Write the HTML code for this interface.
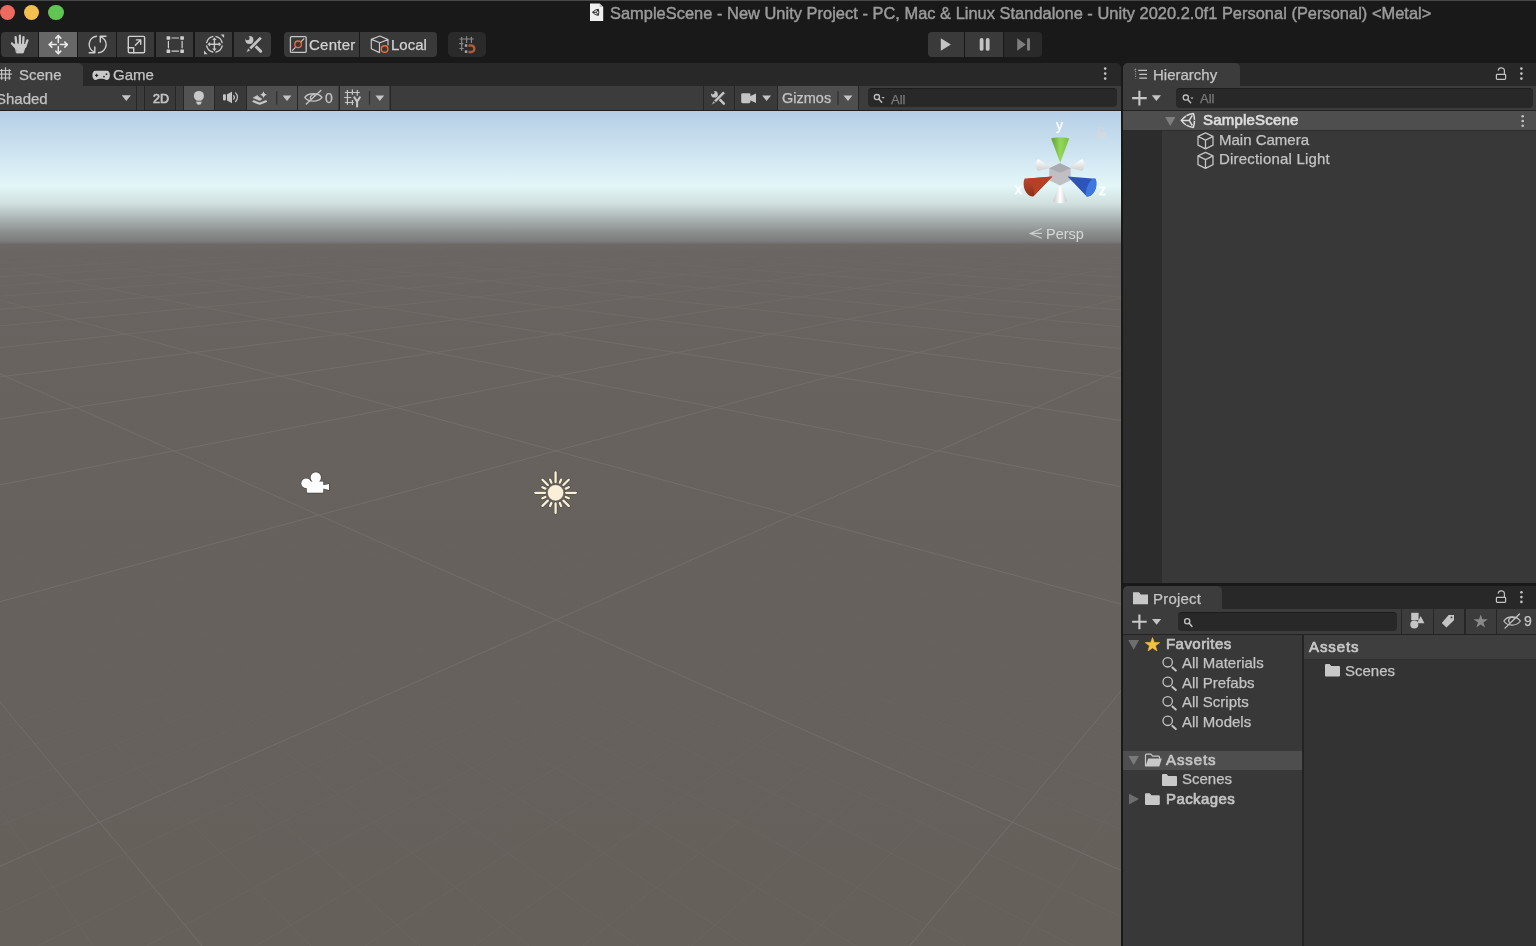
<!DOCTYPE html>
<html><head><meta charset="utf-8">
<style>
*{margin:0;padding:0;box-sizing:border-box}
html,body{width:1536px;height:946px;overflow:hidden;background:#191919}
body{position:relative;font-family:"Liberation Sans",sans-serif;color:#c4c4c4}
.a{position:absolute}
.t{position:absolute;white-space:nowrap;font-size:15px;line-height:18px;will-change:transform;-webkit-text-stroke-width:0.25px}
svg{position:absolute;overflow:visible}
</style></head><body>

<!-- title bar -->
<div class="a" style="left:0;top:0;width:1536px;height:1px;background:#474747"></div>
<div class="a" style="left:-0.3px;top:5px;width:15.4px;height:15.4px;border-radius:50%;background:#ed6a5e"></div>
<div class="a" style="left:23.9px;top:5px;width:15.4px;height:15.4px;border-radius:50%;background:#f4bf4f"></div>
<div class="a" style="left:48.2px;top:5px;width:15.4px;height:15.4px;border-radius:50%;background:#61c554"></div>
<div class="t" style="left:610.4px;top:3px;font-size:16.4px;line-height:20px;color:#9b9b9b;letter-spacing:0.03px;-webkit-text-stroke-width:0.45px">SampleScene - New Unity Project - PC, Mac &amp; Linux Standalone - Unity 2020.2.0f1 Personal (Personal) &lt;Metal&gt;</div>

<!-- main toolbar -->
<!--TOOLS--><!-- tool buttons -->
<div class="a" style="left:1px;top:32px;width:36.8px;height:24.7px;background:#393939;border-radius:4px 0 0 4px"></div>
<div class="a" style="left:39px;top:32px;width:37.9px;height:24.7px;background:#676767"></div>
<div class="a" style="left:78px;top:32px;width:37.8px;height:24.7px;background:#393939"></div>
<div class="a" style="left:117px;top:32px;width:37.3px;height:24.7px;background:#393939"></div>
<div class="a" style="left:156px;top:32px;width:37.2px;height:24.7px;background:#393939"></div>
<div class="a" style="left:195px;top:32px;width:37.1px;height:24.7px;background:#393939"></div>
<div class="a" style="left:234px;top:32px;width:37px;height:24.7px;background:#393939;border-radius:0 4px 4px 0"></div>

<div class="a" style="left:283.8px;top:32px;width:75.3px;height:24.7px;background:#393939;border-radius:4px 0 0 4px"></div>
<div class="a" style="left:360.1px;top:32px;width:76.8px;height:24.7px;background:#393939;border-radius:0 4px 4px 0"></div>
<div class="a" style="left:448.4px;top:31.8px;width:37.9px;height:25.5px;background:#2a2a2a;border-radius:5px"></div>
<div class="a" style="left:927.6px;top:32px;width:36.2px;height:24.7px;background:#3a3a3a;border-radius:4px 0 0 4px"></div>
<div class="a" style="left:965px;top:32px;width:38px;height:24.7px;background:#3a3a3a"></div>
<div class="a" style="left:1004px;top:32px;width:38.3px;height:24.7px;background:#2a2a2a;border-radius:0 4px 4px 0"></div>
<svg width="1536" height="60" style="left:0;top:0">
 <!-- hand -->
 <g fill="#c8c8c8" stroke="#c8c8c8" stroke-linecap="round" stroke-width="2.3">
  <path d="M15.6 37.2L16.4 45M19.9 35.6L19.9 44.5M23.5 37.1L23 45M27.4 40.4L25.2 47M12 43.4L15.8 47.8"/>
  <path stroke-width="1" stroke-linejoin="round" d="M15 44L25.8 44.5L23.2 52.9L16.8 52.9Z"/>
 </g>
 <!-- move -->
 <g fill="none" stroke="#ececec" stroke-width="1.5" stroke-linecap="round" stroke-linejoin="round">
  <path d="M58.3 35.6V42.6M58.3 46.6V53.6M49.3 44.6H56.3M60.3 44.6H67.3"/>
  <path d="M55.8 38.1L58.3 35.6L60.8 38.1M55.8 51.1L58.3 53.6L60.8 51.1M51.8 42.1L49.3 44.6L51.8 47.1M64.8 42.1L67.3 44.6L64.8 47.1"/>
 </g>
 <!-- rotate -->
 <g fill="none" stroke="#d0d0d0" stroke-width="1.4" stroke-linecap="round" stroke-linejoin="round">
  <path d="M96.5 36.2A8.3 8.3 0 0 0 94.5 52.2"/>
  <path d="M89.2 52.7H94.8V47"/>
  <path d="M98.5 52.8A8.3 8.3 0 0 0 100.3 36.6"/>
  <path d="M106 36.2H100.3V42"/>
 </g>
 <!-- scale -->
 <g fill="none" stroke="#d0d0d0" stroke-width="1.4" stroke-linecap="round" stroke-linejoin="round">
  <rect x="128.3" y="36.4" width="16.3" height="16.4" rx="1.2"/>
  <path d="M128.3 47.7H133.7V52.8M135.3 45.3L140.6 40M136.4 39.9H140.7V44.2"/>
 </g>
 <!-- rect -->
 <g fill="#d0d0d0">
  <rect x="166.6" y="36.2" width="3.6" height="3.6" rx="0.6"/><rect x="180.3" y="36.2" width="3.6" height="3.6" rx="0.6"/>
  <rect x="166.6" y="49.4" width="3.6" height="3.6" rx="0.6"/><rect x="180.3" y="49.4" width="3.6" height="3.6" rx="0.6"/>
 </g>
 <path d="M172 38H178.5M172 51.1H178.5M168.4 41.3V47.8M182.1 41.3V47.8" stroke="#d0d0d0" stroke-width="1.2" stroke-linecap="round"/>
 <!-- transform -->
 <g fill="none" stroke="#c8c8c8" stroke-width="1.4" stroke-linecap="round">
  <path d="M216.04 36.57A7.9 7.9 0 0 1 222.13 42.66M222.13 45.94A7.9 7.9 0 0 1 216.04 52.03M212.76 52.03A7.9 7.9 0 0 1 206.67 45.94M206.67 42.66A7.9 7.9 0 0 1 212.76 36.57"/>
  <path d="M214.4 39.2V49.4M209.3 44.3H219.5"/>
 </g>
 <g fill="#c8c8c8">
  <path d="M214.4 37.4L216.6 40H212.2Z M214.4 51.2L216.6 48.6H212.2Z M207.5 44.3L210.1 42.1V46.5Z M221.3 44.3L218.7 42.1V46.5Z"/>
  <path d="M220.6 34.5H224.1V38Z M204 50.6V54.2H207.6Z"/>
 </g>
 <!-- custom tools -->
<g transform="translate(244.8 35.4) scale(1.15)">
 <path d="M4.2 4.2L13.8 13.8" stroke="#c4c4c4" stroke-width="2.7" stroke-linecap="round"/>
 <circle cx="4" cy="4" r="3.5" fill="#c4c4c4"/>
 <circle cx="2.3" cy="2.3" r="1.9" fill="#393939"/>
 <path d="M13.1 0.6L15.4 2.9L5.6 12.7L3.3 10.4Z" fill="#c4c4c4" stroke="#393939" stroke-width="0.9"/>
 <path d="M2.9 11L5 13.1L1 15Z" fill="#c4c4c4" stroke="#393939" stroke-width="0.6"/>
</g>
 <!-- center -->
 <rect x="290.4" y="36.6" width="15.8" height="15.8" rx="1.2" fill="none" stroke="#c8c8c8" stroke-width="1.3"/>
 <path d="M292.5 50.3L295.2 47.6M301.1 41.6L303.8 38.8" stroke="#c8c8c8" stroke-width="1.2" stroke-linecap="round"/>
 <circle cx="298.1" cy="44.3" r="3.3" fill="none" stroke="#ea6f3e" stroke-width="1.3"/>
 <!-- local cube -->
 <g fill="none" stroke="#c8c8c8" stroke-width="1.2" stroke-linejoin="round">
  <path d="M371.3 39.4L379.9 36L388 39.6L379.9 42.8Z M371.3 39.4V48.8L379.5 52.6V42.8 M388 39.6V45.5"/>
 </g>
 <circle cx="384.6" cy="49" r="3.3" fill="#393939" stroke="#ea6f3e" stroke-width="1.4"/>
 <!-- snap -->
 <g stroke="#888" stroke-width="1.2">
  <path d="M461.7 37V50.8M466.6 36.3V42.9M471.4 36.8V42.9M459.4 39H473.8M459.2 43.7H463.4M459.5 48.5H463.7"/>
 </g>
 <rect x="464.8" y="44.3" width="2.5" height="2.5" fill="#a8a8a8"/><rect x="464.8" y="50.4" width="2.5" height="2.5" fill="#a8a8a8"/>
 <path d="M468.5 45.5H471.6A3.3 3.3 0 0 1 471.6 52H468.5" fill="none" stroke="#b05a3c" stroke-width="2.3"/>
 <!-- play/pause/step -->
 <path d="M940.8 38.2L950.9 44.5L940.8 50.8Z" fill="#c4c4c4"/>
 <rect x="979.7" y="38.1" width="3.8" height="12.7" rx="1.9" fill="#c4c4c4"/>
 <rect x="985.8" y="38.1" width="3.8" height="12.7" rx="1.9" fill="#c4c4c4"/>
 <path d="M1017.2 38.2L1025.8 44.5L1017.2 50.8Z" fill="#7e7e7e"/>
 <rect x="1027" y="38.1" width="3" height="12.7" rx="1.5" fill="#7e7e7e"/>
 <!-- doc icon title -->
 <path d="M590 3.5H599.6L603.2 7.1V21.1H590Z" fill="#f0f0f0"/>
 <path d="M599.6 3.5V7.1H603.2" fill="#bdbdbd"/>
 <g fill="none" stroke="#2a2a2a" stroke-width="1" stroke-linejoin="round">
  <path d="M592.6 12.3Q594.8 9.6 598.3 9.2Q599.3 12.3 598.3 15.4Q594.8 15 592.6 12.3Z"/>
  <path d="M592.6 12.3H596.4L598 9.8M596.4 12.3L598 14.8"/>
 </g>
</svg>
<div class="t" style="left:309.3px;top:36px;color:#d2d2d2;letter-spacing:0.25px">Center</div>
<div class="t" style="left:391px;top:36px;color:#d2d2d2">Local</div>
<!--/TOOLS-->

<!-- dock: tab strip -->
<div class="a" style="left:0;top:63px;width:1121px;height:23px;background:#282828;border-top-right-radius:5px"></div>
<div class="a" style="left:0;top:63px;width:83px;height:23px;background:#3c3c3c;border-top-right-radius:5px"></div>
<div class="t" style="left:19px;top:66px">Scene</div>
<div class="t" style="left:113px;top:66px">Game</div>

<!-- scene toolbar -->
<div class="a" style="left:0;top:86px;width:1121px;height:24px;background:#3c3c3c"></div>
<div class="a" style="left:0;top:110px;width:1121px;height:1px;background:#1f1f1f"></div>
<!--SCENETB--><div class="a" style="left:136px;top:86px;width:1.2px;height:24px;background:#262626;"></div>
<div class="a" style="left:144px;top:86px;width:1.2px;height:24px;background:#262626;"></div>
<div class="a" style="left:175px;top:86px;width:1.2px;height:24px;background:#262626;"></div>
<div class="a" style="left:183px;top:86px;width:1.2px;height:24px;background:#262626;"></div>
<div class="a" style="left:214px;top:86px;width:1.2px;height:24px;background:#262626;"></div>
<div class="a" style="left:246px;top:86px;width:1.2px;height:24px;background:#262626;"></div>
<div class="a" style="left:297px;top:86px;width:1.2px;height:24px;background:#262626;"></div>
<div class="a" style="left:338.5px;top:86px;width:1.2px;height:24px;background:#262626;"></div>
<div class="a" style="left:389.5px;top:86px;width:1.2px;height:24px;background:#262626;"></div>
<div class="a" style="left:702.5px;top:86px;width:1.2px;height:24px;background:#262626;"></div>
<div class="a" style="left:734.3px;top:86px;width:1.2px;height:24px;background:#262626;"></div>
<div class="a" style="left:776.8px;top:86px;width:1.2px;height:24px;background:#262626;"></div>
<div class="a" style="left:858.2px;top:86px;width:1.2px;height:24px;background:#262626;"></div>
<div class="a" style="left:145.2px;top:86px;width:29.8px;height:24px;background:#393939;"></div>
<div class="a" style="left:184.2px;top:86px;width:29.8px;height:24px;background:#525252;"></div>
<div class="a" style="left:215.2px;top:86px;width:30.8px;height:24px;background:#393939;"></div>
<div class="a" style="left:247.2px;top:86px;width:49.8px;height:24px;background:#4f4f4f;"></div>
<div class="a" style="left:298.2px;top:86px;width:40.3px;height:24px;background:#4f4f4f;"></div>
<div class="a" style="left:339.7px;top:86px;width:49.8px;height:24px;background:#4f4f4f;"></div>
<div class="a" style="left:703.7px;top:86px;width:30.6px;height:24px;background:#3a3a3a;"></div>
<div class="a" style="left:735.5px;top:86px;width:41.3px;height:24px;background:#3a3a3a;"></div>
<div class="a" style="left:778.2px;top:86px;width:80px;height:24px;background:#4e4e4e;"></div>
<div class="a" style="left:868.3px;top:88.2px;width:248.3px;height:19.2px;background:#282828;border-radius:4px;border-top:1px solid #1c1c1c"></div>
<!--/SCENETB-->

<!-- scene view -->
<div class="a" style="left:0;top:111px;width:1121px;height:835px;overflow:hidden;background:linear-gradient(#b6cfe6 0px,#cde3f1 40px,#e3f7f8 75px,#d0dfde 93px,#a8b0b0 109px,#8b8d8d 122px,#7c7d7d 130px,#6c6865 133.5px,#6a6562 141px,#67625e 300px,#66605b 835px)"><!--GRID--><svg width="1121" height="835" viewBox="0 0 1121 835" style="left:0;top:0">
<defs>
<linearGradient id="gm" x1="0" y1="0" x2="0" y2="835" gradientUnits="userSpaceOnUse">
<stop offset="0.160" stop-color="#fff" stop-opacity="0"/>
<stop offset="0.200" stop-color="#fff" stop-opacity="0.5"/>
<stop offset="0.300" stop-color="#fff" stop-opacity="1"/>
</linearGradient>
<linearGradient id="gn" x1="0" y1="0" x2="0" y2="835" gradientUnits="userSpaceOnUse">
<stop offset="0.52" stop-color="#fff" stop-opacity="0"/>
<stop offset="0.80" stop-color="#fff" stop-opacity="0.85"/>
<stop offset="1" stop-color="#fff" stop-opacity="1"/>
</linearGradient>
<mask id="mm" maskUnits="userSpaceOnUse" x="0" y="0" width="1121" height="835"><rect width="1121" height="835" fill="url(#gm)"/></mask>
<mask id="mn" maskUnits="userSpaceOnUse" x="0" y="0" width="1121" height="835"><rect width="1121" height="835" fill="url(#gn)"/></mask>
</defs>
<path mask="url(#mn)" d="M-2098.20 956.83L-792.96 265.24M3209.91 956.83L1904.68 265.24M-1971.81 956.83L-765.43 265.24M3083.53 956.83L1877.15 265.24M-1845.43 956.83L-737.91 265.24M2957.15 956.83L1849.62 265.24M-1719.04 956.83L-710.38 265.24M2830.76 956.83L1822.10 265.24M-1592.66 956.83L-682.85 265.24M2704.38 956.83L1794.57 265.24M-1466.28 956.83L-655.33 265.24M2578.00 956.83L1767.04 265.24M-1339.89 956.83L-627.80 265.24M2451.61 956.83L1739.52 265.24M-1213.51 956.83L-600.27 265.24M2325.23 956.83L1711.99 265.24M-1087.13 956.83L-572.74 265.24M2198.84 956.83L1684.46 265.24M-834.36 956.83L-517.69 265.24M1946.08 956.83L1629.41 265.24M-707.98 956.83L-490.16 265.24M1819.69 956.83L1601.88 265.24M-581.59 956.83L-462.64 265.24M1693.31 956.83L1574.35 265.24M-455.21 956.83L-435.11 265.24M1566.93 956.83L1546.83 265.24M-328.83 956.83L-407.58 265.24M1440.54 956.83L1519.30 265.24M-202.44 956.83L-380.06 265.24M1314.16 956.83L1491.77 265.24M-76.06 956.83L-352.53 265.24M1187.78 956.83L1464.25 265.24M50.32 956.83L-325.00 265.24M1061.39 956.83L1436.72 265.24M176.71 956.83L-297.48 265.24M935.01 956.83L1409.19 265.24M429.48 956.83L-242.42 265.24M682.24 956.83L1354.14 265.24M555.86 956.83L-214.89 265.24M555.86 956.83L1326.61 265.24M682.24 956.83L-187.37 265.24M429.48 956.83L1299.09 265.24M808.63 956.83L-159.84 265.24M303.09 956.83L1271.56 265.24M935.01 956.83L-132.31 265.24M176.71 956.83L1244.03 265.24M1061.39 956.83L-104.79 265.24M50.32 956.83L1216.50 265.24M1187.78 956.83L-77.26 265.24M-76.06 956.83L1188.98 265.24M1314.16 956.83L-49.73 265.24M-202.44 956.83L1161.45 265.24M1440.54 956.83L-22.21 265.24M-328.83 956.83L1133.92 265.24M1693.31 956.83L32.85 265.24M-581.59 956.83L1078.87 265.24M1819.69 956.83L60.37 265.24M-707.98 956.83L1051.34 265.24M1946.08 956.83L87.90 265.24M-834.36 956.83L1023.82 265.24M2072.46 956.83L115.43 265.24M-960.74 956.83L996.29 265.24M2198.84 956.83L142.96 265.24M-1087.13 956.83L968.76 265.24M2325.23 956.83L170.48 265.24M-1213.51 956.83L941.24 265.24M2451.61 956.83L198.01 265.24M-1339.89 956.83L913.71 265.24M2578.00 956.83L225.54 265.24M-1466.28 956.83L886.18 265.24M2704.38 956.83L253.06 265.24M-1592.66 956.83L858.65 265.24M2957.15 956.83L308.12 265.24M-1845.43 956.83L803.60 265.24M3083.53 956.83L335.64 265.24M-1971.81 956.83L776.07 265.24M3209.91 956.83L363.17 265.24M-2098.20 956.83L748.55 265.24M3336.30 956.83L390.70 265.24M-2224.58 956.83L721.02 265.24M3462.68 956.83L418.22 265.24M-2350.96 956.83L693.49 265.24M3589.06 956.83L445.75 265.24M-2477.35 956.83L665.97 265.24M3715.45 956.83L473.28 265.24M-2603.73 956.83L638.44 265.24M3841.83 956.83L500.81 265.24M-2730.11 956.83L610.91 265.24M3968.21 956.83L528.33 265.24M-2856.50 956.83L583.39 265.24M4220.98 956.83L583.39 265.24M-3109.26 956.83L528.33 265.24M4347.37 956.83L610.91 265.24M-3235.65 956.83L500.81 265.24M4473.75 956.83L638.44 265.24M-3362.03 956.83L473.28 265.24M4600.13 956.83L665.97 265.24M-3488.41 956.83L445.75 265.24M4726.52 956.83L693.49 265.24M-3614.80 956.83L418.22 265.24M4852.90 956.83L721.02 265.24M-3741.18 956.83L390.70 265.24M4979.28 956.83L748.55 265.24M-3867.56 956.83L363.17 265.24M5105.67 956.83L776.07 265.24M-3993.95 956.83L335.64 265.24M5232.05 956.83L803.60 265.24M-4120.33 956.83L308.12 265.24M5484.82 956.83L858.65 265.24M-4373.10 956.83L253.06 265.24M5611.20 956.83L886.18 265.24M-4499.48 956.83L225.54 265.24M5737.58 956.83L913.71 265.24M-4625.87 956.83L198.01 265.24M5863.97 956.83L941.24 265.24M-4752.25 956.83L170.48 265.24M5990.35 956.83L968.76 265.24M-4878.63 956.83L142.96 265.24M6116.73 956.83L996.29 265.24M-5005.02 956.83L115.43 265.24M6243.12 956.83L1023.82 265.24M-5131.40 956.83L87.90 265.24M6369.50 956.83L1051.34 265.24M-5257.78 956.83L60.37 265.24M6495.89 956.83L1078.87 265.24M-5384.17 956.83L32.85 265.24M6748.65 956.83L1133.92 265.24M-5636.93 956.83L-22.21 265.24M6875.04 956.83L1161.45 265.24M-5763.32 956.83L-49.73 265.24M7001.42 956.83L1188.98 265.24M-5889.70 956.83L-77.26 265.24M7127.80 956.83L1216.50 265.24M-6016.09 956.83L-104.79 265.24M7254.19 956.83L1244.03 265.24M-6142.47 956.83L-132.31 265.24M7380.57 956.83L1271.56 265.24M-6268.85 956.83L-159.84 265.24M7506.95 956.83L1299.09 265.24M-6395.24 956.83L-187.37 265.24M7633.34 956.83L1326.61 265.24M-6521.62 956.83L-214.89 265.24M7759.72 956.83L1354.14 265.24M-6648.00 956.83L-242.42 265.24M8012.49 956.83L1409.19 265.24M-6900.77 956.83L-297.48 265.24M8138.87 956.83L1436.72 265.24M-7027.15 956.83L-325.00 265.24M8265.25 956.83L1464.25 265.24M-7153.54 956.83L-352.53 265.24M8391.64 956.83L1491.77 265.24M-7279.92 956.83L-380.06 265.24M8518.02 956.83L1519.30 265.24M-7406.30 956.83L-407.58 265.24M8644.41 956.83L1546.83 265.24M-7532.69 956.83L-435.11 265.24M8770.79 956.83L1574.35 265.24M-7659.07 956.83L-462.64 265.24M8897.17 956.83L1601.88 265.24M-7785.45 956.83L-490.16 265.24M9023.56 956.83L1629.41 265.24M-7911.84 956.83L-517.69 265.24M9276.32 956.83L1684.46 265.24M-8164.61 956.83L-572.74 265.24M9402.71 956.83L1711.99 265.24M-8290.99 956.83L-600.27 265.24M9529.09 956.83L1739.52 265.24M-8417.37 956.83L-627.80 265.24M9655.47 956.83L1767.04 265.24M-8543.76 956.83L-655.33 265.24M9781.86 956.83L1794.57 265.24M-8670.14 956.83L-682.85 265.24M9908.24 956.83L1822.10 265.24M-8796.52 956.83L-710.38 265.24M10034.62 956.83L1849.62 265.24M-8922.91 956.83L-737.91 265.24M10161.01 956.83L1877.15 265.24M-9049.29 956.83L-765.43 265.24M10287.39 956.83L1904.68 265.24M-9175.67 956.83L-792.96 265.24M10540.16 956.83L1959.73 265.24M-9428.44 956.83L-848.01 265.24M10666.54 956.83L1987.26 265.24M-9554.82 956.83L-875.54 265.24M10792.93 956.83L2014.79 265.24M-9681.21 956.83L-903.07 265.24M10919.31 956.83L2042.31 265.24M-9807.59 956.83L-930.59 265.24M11045.69 956.83L2069.84 265.24M-9933.97 956.83L-958.12 265.24M11172.08 956.83L2097.37 265.24M-10060.36 956.83L-985.65 265.24M11298.46 956.83L2124.89 265.24M-10186.74 956.83L-1013.17 265.24M11424.84 956.83L2152.42 265.24M-10313.13 956.83L-1040.70 265.24M11551.23 956.83L2179.95 265.24M-10439.51 956.83L-1068.23 265.24" stroke="#6a6560" stroke-width="1" fill="none"/>
<path mask="url(#mm)" d="M-960.74 956.83L-466.07 133.51M303.09 956.83L-379.10 133.51M1566.93 956.83L-292.13 133.51M2830.76 956.83L-205.15 133.51M4094.60 956.83L-118.18 133.51M5358.43 956.83L-31.21 133.51M6622.27 956.83L55.77 133.51M7886.10 956.83L142.74 133.51M9149.94 956.83L229.71 133.51M10413.77 956.83L316.68 133.51M11677.61 956.83L403.66 133.51M12941.45 956.83L490.63 133.51M14205.28 956.83L577.60 133.51M15469.12 956.83L664.57 133.51M16732.95 956.83L751.55 133.51M17996.79 956.83L838.52 133.51M19260.62 956.83L925.49 133.51M20524.46 956.83L1012.47 133.51M21788.29 956.83L1099.44 133.51M23052.13 956.83L1186.41 133.51M-23204.25 956.83L-161.67 133.51M-21940.41 956.83L-74.69 133.51M-20676.58 956.83L12.28 133.51M-19412.74 956.83L99.25 133.51M-18148.90 956.83L186.22 133.51M-16885.07 956.83L273.20 133.51M-15621.23 956.83L360.17 133.51M-14357.40 956.83L447.14 133.51M-13093.56 956.83L534.12 133.51M-11829.73 956.83L621.09 133.51M-10565.89 956.83L708.06 133.51M-9302.06 956.83L795.03 133.51M-8038.22 956.83L882.01 133.51M-6774.39 956.83L968.98 133.51M-5510.55 956.83L1055.95 133.51M-4246.72 956.83L1142.92 133.51M-2982.88 956.83L1229.90 133.51M-1719.04 956.83L1316.87 133.51M-455.21 956.83L1403.84 133.51M808.63 956.83L1490.82 133.51" stroke="#726e6a" stroke-width="1" fill="none"/>
</svg><!--/GRID--></div>

<!-- hierarchy -->
<div class="a" style="left:1121px;top:63px;width:2.5px;height:883px;background:#191919"></div>
<div class="a" style="left:1123px;top:63px;width:413px;height:23px;background:#282828;border-top-left-radius:5px"></div>
<div class="a" style="left:1123px;top:63px;width:117px;height:23px;background:#3c3c3c;border-top-left-radius:5px;border-top-right-radius:5px"></div>
<div class="t" style="left:1153px;top:66px">Hierarchy</div>
<div class="a" style="left:1123px;top:86px;width:413px;height:24px;background:#3c3c3c"></div>
<div class="a" style="left:1123px;top:110px;width:413px;height:1px;background:#232323"></div>
<div class="a" style="left:1175.9px;top:88px;width:357px;height:19.8px;background:#282828;border-radius:4px;border-top:1px solid #1c1c1c"></div>

<div class="a" style="left:1123px;top:111px;width:413px;height:472px;background:#383838"></div>
<div class="a" style="left:1123px;top:111px;width:413px;height:19px;background:#4e4e4e"></div>
<div class="a" style="left:1123px;top:129.5px;width:413px;height:1px;background:#2e2e2e"></div>
<div class="a" style="left:1123px;top:130px;width:39px;height:453px;background:#2c2c2c"></div>
<div class="t" style="left:1203px;top:111px;font-weight:normal;-webkit-text-stroke-width:0.7px;color:#dcdcdc;letter-spacing:0.2px">SampleScene</div>
<div class="t" style="left:1219px;top:131px">Main Camera</div>
<div class="t" style="left:1219px;top:150px;letter-spacing:0.2px">Directional Light</div>

<!-- project -->
<div class="a" style="left:1123px;top:583px;width:413px;height:3px;background:#191919"></div>
<div class="a" style="left:1123px;top:586px;width:413px;height:23px;background:#282828;border-top-left-radius:5px"></div>
<div class="a" style="left:1123px;top:586px;width:99px;height:23px;background:#3c3c3c;border-top-left-radius:5px;border-top-right-radius:5px"></div>
<div class="t" style="left:1153px;top:590px;letter-spacing:0.2px">Project</div>
<div class="a" style="left:1123px;top:609px;width:413px;height:25px;background:#3c3c3c"></div>
<div class="a" style="left:1123px;top:634px;width:413px;height:1px;background:#232323"></div>
<div class="a" style="left:1178px;top:612px;width:219.4px;height:19px;background:#282828;border-radius:4px;border-top:1px solid #1c1c1c"></div>
<div class="a" style="left:1400.8px;top:608px;width:1.2px;height:26px;background:#262626;"></div>
<div class="a" style="left:1433.3px;top:608px;width:1.2px;height:26px;background:#262626;"></div>
<div class="a" style="left:1464.4px;top:608px;width:1.2px;height:26px;background:#262626;"></div>
<div class="a" style="left:1495.9px;top:608px;width:1.2px;height:26px;background:#262626;"></div>

<div class="a" style="left:1123px;top:635px;width:179px;height:311px;background:#383838"></div>
<div class="a" style="left:1302px;top:635px;width:1.5px;height:311px;background:#232323"></div>
<div class="a" style="left:1303.5px;top:635px;width:233px;height:311px;background:#333333"></div>
<div class="a" style="left:1303.5px;top:635px;width:233px;height:24px;background:#3e3e3e"></div>
<div class="a" style="left:1303.5px;top:659px;width:233px;height:1px;background:#2f2f2f"></div>
<div class="t" style="left:1309px;top:638px;font-weight:normal;-webkit-text-stroke-width:0.7px;color:#c8c8c8;letter-spacing:0.9px">Assets</div>
<div class="t" style="left:1345px;top:662px">Scenes</div>
<div class="t" style="left:1166px;top:635px;font-weight:normal;-webkit-text-stroke-width:0.7px;letter-spacing:0.45px">Favorites</div>
<div class="t" style="left:1182px;top:654px">All Materials</div>
<div class="t" style="left:1182px;top:674px">All Prefabs</div>
<div class="t" style="left:1182px;top:693px">All Scripts</div>
<div class="t" style="left:1182px;top:713px">All Models</div>
<div class="a" style="left:1123px;top:751px;width:179px;height:19px;background:#4e4e4e"></div>
<div class="t" style="left:1166px;top:751px;font-weight:normal;-webkit-text-stroke-width:0.7px;letter-spacing:0.9px">Assets</div>
<div class="t" style="left:1182px;top:770px">Scenes</div>
<div class="t" style="left:1166px;top:790px;font-weight:normal;-webkit-text-stroke-width:0.7px;letter-spacing:0.4px">Packages</div>

<!--ICONS2--><svg width="1536" height="946" style="left:0;top:0">
 <!-- scene tab grid icon -->
 <path d="M1.6 68.9V79.8M5.5 67.3V81M9.3 68.9V79.8M0 70.5H10.9M0 74.2H11.9M0 78H10.9" stroke="#c4c4c4" stroke-width="1.2"/>
 <!-- gamepad -->
 <path d="M95.5 70.7H106.8C108.8 70.7 109.9 72.8 109.9 75.3C109.9 78.3 108.5 80 106.7 80C105 80 104.2 78.8 102.6 78.8H99.6C98 78.8 97.2 80 95.6 80C93.8 80 92.4 78.3 92.4 75.3C92.4 72.8 93.5 70.7 95.5 70.7Z" fill="#c8c8c8"/>
 <path d="M95 75.4H98.2M96.6 73.8V77" stroke="#282828" stroke-width="1.1"/>
 <circle cx="106.5" cy="74.2" r="0.9" fill="#282828"/><circle cx="104" cy="76.6" r="0.9" fill="#282828"/>
 <!-- shaded arrow -->
 <path d="M121.7 95.2H130.9L126.3 101Z" fill="#c4c4c4"/>
 <!-- bulb -->
 <circle cx="198.9" cy="95.9" r="5" fill="#c8c8c8"/>
 <path d="M196.4 100.2H201.4V102.2A2.5 2.5 0 0 1 196.4 102.2Z" fill="#c8c8c8"/>
 <path d="M196.4 101.2H201.4" stroke="#545454" stroke-width="0.9"/>
 <!-- audio -->
 <rect x="223" y="94.2" width="2.9" height="6.2" rx="0.8" fill="#c4c4c4"/>
 <path d="M227 94.3L232 91.7V103.2L227 100.6Z" fill="#c4c4c4"/>
 <path d="M233.6 95.7A2.6 2.6 0 0 1 233.6 99.2M235.6 92.9A6 6 0 0 1 235.6 101.5" fill="none" stroke="#c4c4c4" stroke-width="1.2" stroke-linecap="round"/>
 <!-- effects -->
 <path d="M253.6 101.3L259.7 103.7L265.9 101.3" fill="none" stroke="#c8c8c8" stroke-width="2.2" stroke-linecap="round" stroke-linejoin="round"/>
 <path d="M253.2 97.8L257.4 95.4L259.2 97.4L261.6 98.6L261.2 99.8L259.6 100.6Z" fill="#c8c8c8" stroke="#c8c8c8" stroke-width="0.6" stroke-linejoin="round"/>
 <path d="M263.5 90.4Q264.1 94.2 268.1 94.8Q264.1 95.4 263.5 98.9Q262.9 95.4 258.9 94.8Q262.9 94.2 263.5 90.4Z" fill="#c8c8c8" stroke="#4a4a4a" stroke-width="0.7"/>
 <path d="M276.7 91V104.6" stroke="#2e2e2e" stroke-width="1.2"/>
 <path d="M282.6 95.4H291.4L287 101.1Z" fill="#c4c4c4"/>
 <!-- hidden eye -->
 <path d="M304.8 97.4C308 92.5 318.5 92.5 322 97.4C318.5 102.3 308 102.3 304.8 97.4Z" fill="none" stroke="#c4c4c4" stroke-width="1.3"/>
 <path d="M306.3 104L320.8 90.6" stroke="#c4c4c4" stroke-width="1.4" stroke-linecap="round"/>
 <path d="M310.8 99.2A3 3 0 0 1 315.5 95.6" fill="none" stroke="#c4c4c4" stroke-width="1.2"/>
 <!-- grid Y icon -->
 <path d="M347.4 90V104.7M352.4 89.6V94.7M352.4 100V104.9M357.3 90V95.8M344.9 92.5H359.8M344.2 97.5H351.2M344.9 102.5H353.8" stroke="#c8c8c8" stroke-width="1.2"/>
 <path d="M354.3 97.3L357.1 101.6L359.9 97.3M357.1 101.6V106.4" fill="none" stroke="#c8c8c8" stroke-width="2" stroke-linecap="round" stroke-linejoin="round"/>
 <path d="M369.5 91V104.6" stroke="#2e2e2e" stroke-width="1.2"/>
 <path d="M375.4 95.4H384.2L379.8 101.1Z" fill="#c4c4c4"/>
 <!-- scene tools icon -->
<g transform="translate(710.6 90.4) scale(0.96)">
 <path d="M4.2 4.2L13.8 13.8" stroke="#c4c4c4" stroke-width="2.7" stroke-linecap="round"/>
 <circle cx="4" cy="4" r="3.5" fill="#c4c4c4"/>
 <circle cx="2.3" cy="2.3" r="1.9" fill="#3a3a3a"/>
 <path d="M13.1 0.6L15.4 2.9L5.6 12.7L3.3 10.4Z" fill="#c4c4c4" stroke="#3a3a3a" stroke-width="0.9"/>
 <path d="M2.9 11L5 13.1L1 15Z" fill="#c4c4c4" stroke="#3a3a3a" stroke-width="0.6"/>
</g>
 <!-- camera -->
 <rect x="741.2" y="93.2" width="9.2" height="10" rx="1.4" fill="#c4c4c4"/>
 <path d="M750 96.2L756 93.4V103L750 100.2Z" fill="#c4c4c4"/>
 <path d="M762.2 95.4H771L766.6 101Z" fill="#c4c4c4"/>
 <path d="M838 91V104.8" stroke="#2e2e2e" stroke-width="1.2"/>
 <path d="M843.5 95.4H852.4L848 101Z" fill="#c4c4c4"/>
 <!-- scene search icon -->
 <circle cx="876.9" cy="97.1" r="2.6" fill="none" stroke="#bdbdbd" stroke-width="1.3"/>
 <path d="M878.8 99L881.7 102.3" stroke="#bdbdbd" stroke-width="1.5" stroke-linecap="round"/>
 <path d="M881.6 97H884.7L883.15 98.8Z" fill="#bdbdbd"/>
 <!-- kebabs -->
 <g fill="#c4c4c4">
  <circle cx="1105.2" cy="68.6" r="1.3"/><circle cx="1105.2" cy="73.6" r="1.3"/><circle cx="1105.2" cy="78.6" r="1.3"/>
  <circle cx="1521.4" cy="68.6" r="1.3"/><circle cx="1521.4" cy="73.6" r="1.3"/><circle cx="1521.4" cy="78.6" r="1.3"/>
  <circle cx="1522.7" cy="116.2" r="1.3"/><circle cx="1522.7" cy="121" r="1.3"/><circle cx="1522.7" cy="125.8" r="1.3"/>
  <circle cx="1521.4" cy="592.3" r="1.3"/><circle cx="1521.4" cy="597.1" r="1.3"/><circle cx="1521.4" cy="601.9" r="1.3"/>
 </g>
 <!-- locks -->
 <g fill="none" stroke="#c4c4c4" stroke-width="1.2">
  <rect x="1496.4" y="74.3" width="9.2" height="5" rx="0.8"/>
  <path d="M1504.4 74.3V71.2A3.1 3.1 0 0 0 1498.2 70.6"/>
  <rect x="1496.4" y="597.3" width="9.2" height="5" rx="0.8"/>
  <path d="M1504.4 597.3V594.2A3.1 3.1 0 0 0 1498.2 593.6"/>
 </g>
 <!-- hierarchy tab icon -->
 <path d="M1138.3 70.4H1147M1139.3 74.3H1147M1139.3 78.2H1147" stroke="#c4c4c4" stroke-width="1.2"/><path d="M1135.6 68.6V78.6M1134.4 69.8H1136.8" stroke="#a8a8a8" stroke-width="0.9" stroke-dasharray="1.2 1.2"/>
 <!-- plus & arrows -->
 <path d="M1139.4 90.8V105.4M1132.1 98.1H1146.7" stroke="#c8c8c8" stroke-width="2.1"/>
 <path d="M1151.8 95.2H1161L1156.4 101Z" fill="#c4c4c4"/>
 <path d="M1139.4 614.4V629.2M1132.1 621.8H1146.7" stroke="#c8c8c8" stroke-width="2.1"/>
 <path d="M1152 619H1161.2L1156.6 624.8Z" fill="#c4c4c4"/>
 <!-- hier search icon -->
 <circle cx="1185.8" cy="97.6" r="2.6" fill="none" stroke="#bdbdbd" stroke-width="1.3"/>
 <path d="M1187.7 99.5L1190.6 102.8" stroke="#bdbdbd" stroke-width="1.5" stroke-linecap="round"/>
 <path d="M1190.4 97.5H1193.5L1191.95 99.3Z" fill="#bdbdbd"/>
 <!-- project search icon -->
 <circle cx="1187.2" cy="621.2" r="2.6" fill="none" stroke="#c4c4c4" stroke-width="1.3"/>
 <path d="M1189.1 623.1L1192 626.4" stroke="#c4c4c4" stroke-width="1.5" stroke-linecap="round"/>
 <!-- SampleScene triangle + unity logo -->
 <path d="M1165.1 117H1175.5L1170.3 125.9Z" fill="#7e7e7e"/>
 <g fill="none" stroke="#dcdcdc" stroke-width="1.5" stroke-linejoin="round">
  <path d="M1181.3 120.4Q1185.6 114.4 1193.4 113.4Q1195.6 120.4 1193.4 127.4Q1185.6 126.4 1181.3 120.4Z"/>
  <path d="M1181.3 120.4H1189.2L1192.3 115.3M1189.2 120.4L1192.3 125.5"/>
 </g>
 <g stroke="#4e4e4e" stroke-width="0.9">
  <path d="M1186.2 115.4L1187 117M1186.2 125.4L1187 123.8M1195.2 120.4H1193.6"/>
 </g>
 <!-- cubes -->
 <g fill="none" stroke="#c4c4c4" stroke-width="1.3" stroke-linejoin="round">
  <path d="M1205.5 132.8L1213 136.4V145.2L1205.5 148.8L1198 145.2V136.4Z M1198 136.4L1205.5 140.1L1213 136.4M1205.5 140.1V148.8"/>
  <path d="M1205.5 152.3L1213 155.9V164.7L1205.5 168.3L1198 164.7V155.9Z M1198 155.9L1205.5 159.6L1213 155.9M1205.5 159.6V168.3"/>
 </g>
 <!-- project tab folder -->
 <path d="M1133 592.2H1139L1140.8 594.6H1148V604.2H1133Z" fill="#c8c8c8"/>
 <!-- project toolbar icons -->
 <g fill="#c4c4c4">
  <rect x="1411.2" y="612.8" width="7.4" height="7.4"/>
  <path d="M1420.7 616L1424.4 623.3H1417Z"/>
  <circle cx="1414.3" cy="624.6" r="4"/>
  <path d="M1448.6 614.9H1454V620.3L1446.4 627.6L1441.8 623Z"/>
 </g>
 <circle cx="1451.5" cy="617.4" r="0.9" fill="#3c3c3c"/>
 <path d="M1480.7 614.4L1482.4 619.3H1487.8L1483.4 622.4L1485.1 627.6L1480.7 624.4L1476.3 627.6L1478 622.4L1473.6 619.3H1479Z" fill="#8a8a8a"/>
 <path d="M1503.9 621C1507.5 615.5 1516.3 615.5 1520.4 621C1516.3 626.5 1507.5 626.5 1503.9 621Z" fill="none" stroke="#c4c4c4" stroke-width="1.2"/>
 <path d="M1505 628.1L1519.5 614" stroke="#c4c4c4" stroke-width="1.3" stroke-linecap="round"/>
 <path d="M1509.5 622.8A3 3 0 0 1 1514.8 618.6" fill="none" stroke="#c4c4c4" stroke-width="1.1"/>
 <!-- favorites -->
 <path d="M1128.2 640H1139.1L1133.65 649.7Z" fill="#6e6e6e"/>
 <path d="M1152.5 637.6L1154.3 642.4L1159.8 642.6L1155.5 645.8L1157 650.9L1152.5 647.9L1148 650.9L1149.5 645.8L1145.2 642.6L1150.7 642.4Z" fill="#f4c03d" stroke="#f4c03d" stroke-width="0.6" stroke-linejoin="round"/>
 <g fill="none" stroke="#c4c4c4">
  <circle cx="1167.7" cy="662.3" r="4.7" stroke-width="1.3"/>
  <path d="M1172.4 667.4L1175.8 670.6" stroke-width="2" stroke-linecap="round"/>
  <circle cx="1167.7" cy="681.8" r="4.7" stroke-width="1.3"/>
  <path d="M1172.4 686.9L1175.8 690.1" stroke-width="2" stroke-linecap="round"/>
  <circle cx="1167.7" cy="701.3" r="4.7" stroke-width="1.3"/>
  <path d="M1172.4 706.4L1175.8 709.6" stroke-width="2" stroke-linecap="round"/>
  <circle cx="1167.7" cy="720.8" r="4.7" stroke-width="1.3"/>
  <path d="M1172.4 725.9L1175.8 729.1" stroke-width="2" stroke-linecap="round"/>
 </g>
 <!-- assets tree -->
 <path d="M1128.4 755.9H1138.9L1133.65 765.1Z" fill="#7a7a7a"/>
 <path d="M1145.5 766.2V755.2Q1145.5 754.2 1146.5 754.2H1150.8L1152.6 756.2H1158.5Q1159.5 756.2 1159.5 757.2V758.8" fill="none" stroke="#c8c8c8" stroke-width="1.2"/>
 <path d="M1148.2 758.6H1161.8L1159.3 766.4H1145.5Z" fill="#c8c8c8"/>
 <path d="M1162 775Q1162 774 1163 774H1166.6L1168.2 776H1176Q1177 776 1177 777V785Q1177 786 1176 786H1163Q1162 786 1162 785Z" fill="#c8c8c8"/>
 <path d="M1129 793.7V804.4L1139 799.05Z" fill="#6e6e6e"/>
 <path d="M1145 794.3Q1145 793.3 1146 793.3H1149.8L1151.4 795.3H1158.8Q1159.8 795.3 1159.8 796.3V804Q1159.8 805 1158.8 805H1146Q1145 805 1145 804Z" fill="#c8c8c8"/>
 <path d="M1325 665Q1325 664 1326 664H1329.6L1331.2 666H1339Q1340 666 1340 667V675.5Q1340 676.5 1339 676.5H1326Q1325 676.5 1325 675.5Z" fill="#c8c8c8"/>
 <!-- sun -->
 <g stroke="#3e3a36" stroke-opacity="0.55" stroke-width="3.6" stroke-linecap="round" fill="none" transform="translate(555.6 492.8)">
  <path d="M0 -10.6V-20.3M0 10.6V20.3M-10.6 0H-20.3M10.6 0H20.3M7.8 -7.8L13.1 -13.1M-7.8 -7.8L-13.1 -13.1M7.8 7.8L13.1 13.1M-7.8 7.8L-13.1 13.1"/>
  <path d="M4.2 -10.2L5.5 -13.2M-4.2 -10.2L-5.5 -13.2M4.2 10.2L5.5 13.2M-4.2 10.2L-5.5 13.2M10.2 -4.2L13.2 -5.5M-10.2 -4.2L-13.2 -5.5M10.2 4.2L13.2 5.5M-10.2 4.2L-13.2 5.5"/>
 </g>
 <g stroke="#f8f0d6" stroke-width="2.3" stroke-linecap="round" fill="none" transform="translate(555.6 492.8)">
  <path d="M0 -10.6V-20.3M0 10.6V20.3M-10.6 0H-20.3M10.6 0H20.3M7.8 -7.8L13.1 -13.1M-7.8 -7.8L-13.1 -13.1M7.8 7.8L13.1 13.1M-7.8 7.8L-13.1 13.1"/>
  <path d="M4.2 -10.2L5.5 -13.2M-4.2 -10.2L-5.5 -13.2M4.2 10.2L5.5 13.2M-4.2 10.2L-5.5 13.2M10.2 -4.2L13.2 -5.5M-10.2 -4.2L-13.2 -5.5M10.2 4.2L13.2 5.5M-10.2 4.2L-13.2 5.5"/>
 </g>
 <circle cx="555.6" cy="492.8" r="8.1" fill="#faf0d8" stroke="#3e3a36" stroke-opacity="0.5" stroke-width="0.8"/>
 <!-- camera gizmo -->
 <g stroke="#3a3734" stroke-opacity="0.6" stroke-width="1.4" fill="#3a3734">
  <circle cx="315.8" cy="477.5" r="5.2"/><circle cx="306.2" cy="483.3" r="4.9"/>
  <rect x="306.8" y="481.6" width="16.5" height="11.1" rx="1"/>
  <path d="M323 485.6L329 484V490L323 488.3Z"/>
 </g>
 <g fill="#fff">
  <circle cx="315.8" cy="477.5" r="5.2"/><circle cx="306.2" cy="483.3" r="4.9"/>
  <rect x="306.8" y="481.6" width="16.5" height="11.1" rx="1"/>
  <path d="M322 485.6L329 484V490L322 488.3Z"/>
 </g>
</svg>
<!--/ICONS2-->
<!--GIZMO--><svg width="1536" height="946" style="left:0;top:0">
 <defs>
  <linearGradient id="gg" x1="0" x2="1"><stop offset="0" stop-color="#5f9e30"/><stop offset="0.5" stop-color="#93d85a"/><stop offset="1" stop-color="#79c043"/></linearGradient>
  <linearGradient id="gr" x1="0" y1="0" x2="0.3" y2="1"><stop offset="0" stop-color="#c24a2c"/><stop offset="1" stop-color="#8e2f1a"/></linearGradient>
  <linearGradient id="gb" x1="0" y1="0" x2="0" y2="1"><stop offset="0" stop-color="#3b6fd8"/><stop offset="1" stop-color="#2a4fa8"/></linearGradient>
  <linearGradient id="gw" x1="0" y1="0" x2="0" y2="1"><stop offset="0" stop-color="#ffffff"/><stop offset="1" stop-color="#cfd0d2"/></linearGradient>
  <linearGradient id="gw2" x1="0" x2="1"><stop offset="0" stop-color="#c8c9cb"/><stop offset="0.5" stop-color="#ffffff"/><stop offset="1" stop-color="#c8c9cb"/></linearGradient>
 </defs>
 <!-- white cones -->
 <path d="M1038.5 159.3L1049.3 166.3L1049.3 168.3L1038.5 170.7A2.8 5.7 0 0 1 1038.5 159.3Z" fill="url(#gw)"/>
 <path d="M1081.6 159.3L1070.8 166.3L1070.8 168.3L1081.6 170.7A2.8 5.7 0 0 0 1081.6 159.3Z" fill="url(#gw)"/>
 <path d="M1053.3 200.5L1059.1 185.3H1061.2L1066.9 200.5A6.8 2.7 0 0 1 1053.3 200.5Z" fill="url(#gw2)"/>
 <!-- cube -->
 <path d="M1060 163.2L1070.7 168.3V180.3L1060 185.4L1049.2 180.3V168.3Z" fill="#c0c0c4"/>
 <path d="M1060 163.2L1070.7 168.3L1060 172.8L1049.2 168.3Z" fill="#a9abb1"/>
 <!-- green -->
 <path d="M1051.2 138.6L1060.2 162.7L1069.2 138.6A9 1.3 0 0 0 1051.2 138.6Z" fill="url(#gg)"/>
 <!-- red -->
 <path d="M1024.6 178.8L1052.4 176.6L1033.2 196.4C1030 197.5 1025.3 193 1024 187.6C1023.3 183.8 1023.6 180.2 1024.6 178.8Z" fill="url(#gr)"/>
 <path d="M1024.6 178.8C1026.7 177.2 1030.6 181 1032.7 186.5C1034.6 191.4 1034.5 195.6 1033.2 196.4L1052.4 176.6Z" fill="#b44126"/>
 <!-- blue -->
 <path d="M1095.4 178.8L1067.6 176.6L1086.8 196.4C1090 197.5 1094.7 193 1096 187.6C1096.7 183.8 1096.4 180.2 1095.4 178.8Z" fill="#2d55b8"/>
 <path d="M1095.4 178.8C1093.3 177.2 1089.4 181 1087.3 186.5C1085.4 191.4 1085.5 195.6 1086.8 196.4C1090 197.5 1094.7 193 1096 187.6C1096.7 183.8 1096.4 180.2 1095.4 178.8Z" fill="#3f77e0"/>
 <!-- lock faint -->
 <rect x="1097" y="132" width="8.8" height="6" rx="0.8" fill="#d8dadc" fill-opacity="0.7"/>
 <path d="M1098.5 132V130.2A2.8 2.8 0 0 1 1104 129.6" fill="none" stroke="#d8dadc" stroke-opacity="0.7" stroke-width="1.2"/>
 <!-- persp arrow -->
 <path d="M1041.8 228.6L1030.2 233.4L1041.8 238.2M1030.2 233.4H1041.8" fill="none" stroke="#d9d9d9" stroke-opacity="0.85" stroke-width="1.1"/>
</svg>
<div class="t" style="left:1056px;top:116px;font-size:14px;color:#fff">y</div>
<div class="t" style="left:1014.5px;top:180px;font-size:14px;color:#fff;-webkit-text-stroke-width:0.5px">x</div>
<div class="t" style="left:1098.5px;top:181px;font-size:14px;color:#fff;-webkit-text-stroke-width:0.5px">z</div>
<div class="t" style="left:1046px;top:224.5px;font-size:14.5px;color:rgba(235,235,235,0.78);-webkit-text-stroke-width:0">Persp</div>
<!-- toolbar texts -->
<div class="t" style="left:-4.5px;top:89.8px">Shaded</div>
<div class="t" style="left:152.8px;top:89.8px;font-size:12.5px;font-weight:normal;-webkit-text-stroke-width:0.7px">2D</div>
<div class="t" style="left:324.5px;top:89px;font-size:14px">0</div>
<div class="t" style="left:782px;top:89px;font-size:14.5px">Gizmos</div>
<div class="t" style="left:891.3px;top:90.5px;font-size:13px;color:#7a7a7a">All</div>
<div class="t" style="left:1199.6px;top:90.3px;font-size:13px;color:#7a7a7a">All</div>
<div class="t" style="left:1523.5px;top:612px;font-size:14px">9</div>
<!--/GIZMO-->
</body></html>
